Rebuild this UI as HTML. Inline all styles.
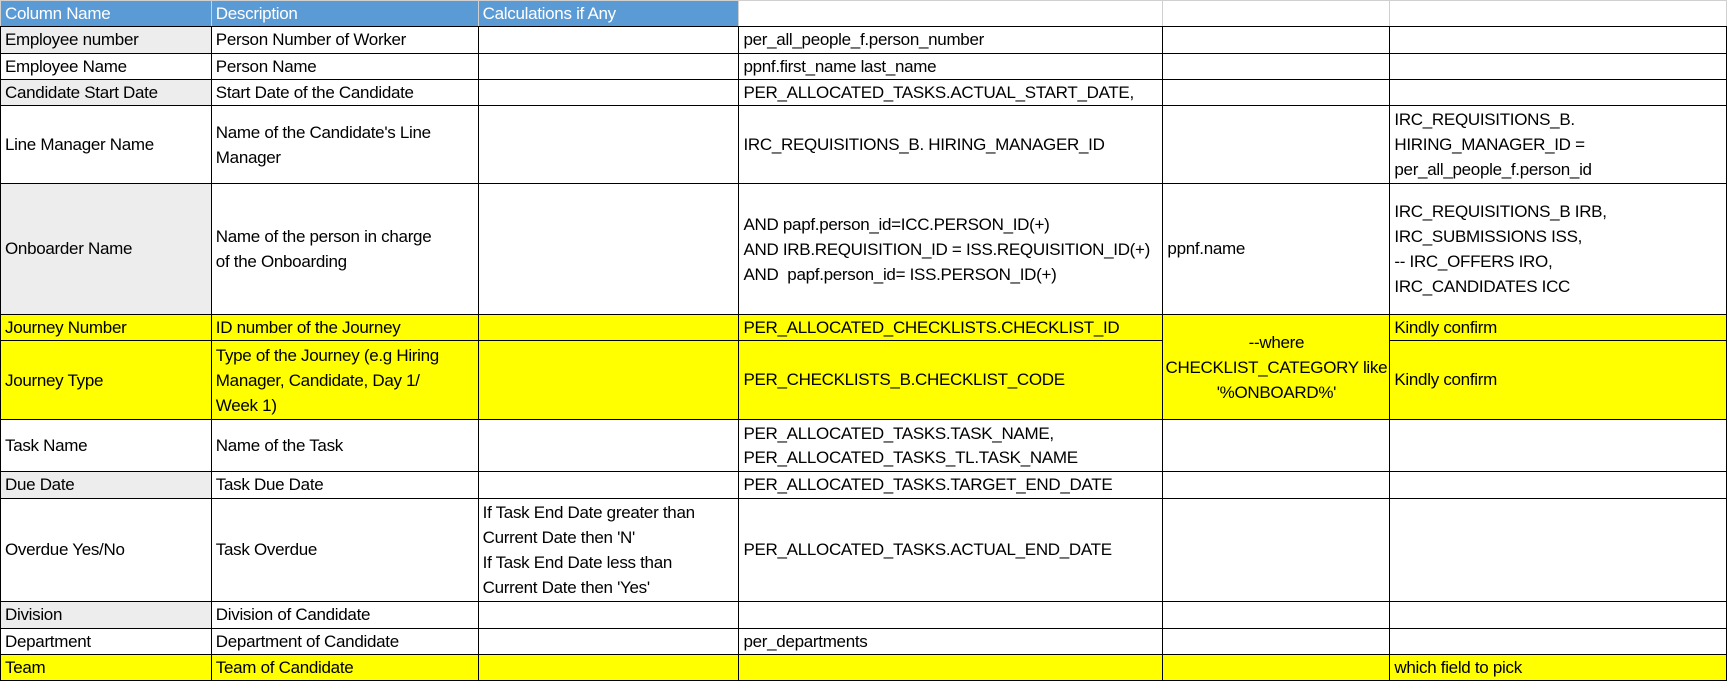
<!DOCTYPE html>
<html><head><meta charset="utf-8"><style>
html,body{margin:0;padding:0;background:#fff;width:1727px;height:680px;overflow:hidden}
table{border-collapse:collapse;table-layout:fixed;font-family:"Liberation Sans",sans-serif;font-size:17px;color:#000;position:absolute;left:0;top:0}
td{border:1px solid #000;padding:0 0 0 4px;vertical-align:middle;line-height:24px;overflow:hidden;white-space:nowrap;letter-spacing:-0.3px}
.h td{background:#5b9bd5;color:#fff;border:1px solid #d0d0d0;border-bottom:1px solid #000;vertical-align:bottom}
.h td.n{background:#fff}
.g{background:#ededed}
.y td{background:#ffff00}
.c{text-align:center;padding:0}
.l{line-height:25px}
</style></head><body>
<table>
<colgroup><col style="width:211px"><col style="width:267px"><col style="width:261px"><col style="width:424px"><col style="width:227px"><col style="width:337px"></colgroup>
<tr class="h" style="height:26px"><td>Column Name</td><td>Description</td><td>Calculations if Any</td><td class="n"></td><td class="n"></td><td class="n"></td></tr>
<tr style="height:27px"><td class="g">Employee number</td><td>Person Number of Worker</td><td></td><td>per_all_people_f.person_number</td><td></td><td></td></tr>
<tr style="height:26px"><td>Employee Name</td><td>Person Name</td><td></td><td>ppnf.first_name last_name</td><td></td><td></td></tr>
<tr style="height:26px"><td class="g">Candidate Start Date</td><td>Start Date of the Candidate</td><td></td><td>PER_ALLOCATED_TASKS.ACTUAL_START_DATE,</td><td></td><td></td></tr>
<tr style="height:78px"><td>Line Manager Name</td><td class="l">Name of the Candidate's Line<br>Manager</td><td></td><td>IRC_REQUISITIONS_B. HIRING_MANAGER_ID</td><td></td><td class="l">IRC_REQUISITIONS_B.<br>HIRING_MANAGER_ID =<br>per_all_people_f.person_id</td></tr>
<tr style="height:131px"><td class="g">Onboarder Name</td><td class="l">Name of the person in charge<br>of the Onboarding</td><td></td><td class="l">AND papf.person_id=ICC.PERSON_ID(+)<br>AND IRB.REQUISITION_ID = ISS.REQUISITION_ID(+)<br>AND &nbsp;papf.person_id= ISS.PERSON_ID(+)</td><td>ppnf.name</td><td class="l">IRC_REQUISITIONS_B IRB,<br>IRC_SUBMISSIONS ISS,<br>-- IRC_OFFERS IRO,<br>IRC_CANDIDATES ICC</td></tr>
<tr class="y" style="height:26px"><td>Journey Number</td><td>ID number of the Journey</td><td></td><td>PER_ALLOCATED_CHECKLISTS.CHECKLIST_ID</td><td rowspan="2" class="c l">--where<br>CHECKLIST_CATEGORY like<br>'%ONBOARD%'</td><td>Kindly confirm</td></tr>
<tr class="y" style="height:79px"><td class="l">Journey Type</td><td class="l">Type of the Journey (e.g Hiring<br>Manager, Candidate, Day 1/<br>Week 1)</td><td></td><td>PER_CHECKLISTS_B.CHECKLIST_CODE</td><td>Kindly confirm</td></tr>
<tr style="height:52px"><td>Task Name</td><td>Name of the Task</td><td></td><td>PER_ALLOCATED_TASKS.TASK_NAME,<br>PER_ALLOCATED_TASKS_TL.TASK_NAME</td><td></td><td></td></tr>
<tr style="height:27px"><td class="g">Due Date</td><td>Task Due Date</td><td></td><td>PER_ALLOCATED_TASKS.TARGET_END_DATE</td><td></td><td></td></tr>
<tr style="height:103px"><td>Overdue Yes/No</td><td>Task Overdue</td><td class="l">If Task End Date greater than<br>Current Date then 'N'<br>If Task End Date less than<br>Current Date then 'Yes'</td><td>PER_ALLOCATED_TASKS.ACTUAL_END_DATE</td><td></td><td></td></tr>
<tr style="height:27px"><td class="g">Division</td><td>Division of Candidate</td><td></td><td></td><td></td><td></td></tr>
<tr style="height:26px"><td>Department</td><td>Department of Candidate</td><td></td><td>per_departments</td><td></td><td></td></tr>
<tr class="y" style="height:26px"><td>Team</td><td>Team of Candidate</td><td></td><td></td><td></td><td>which field to pick</td></tr>
</table>
</body></html>
